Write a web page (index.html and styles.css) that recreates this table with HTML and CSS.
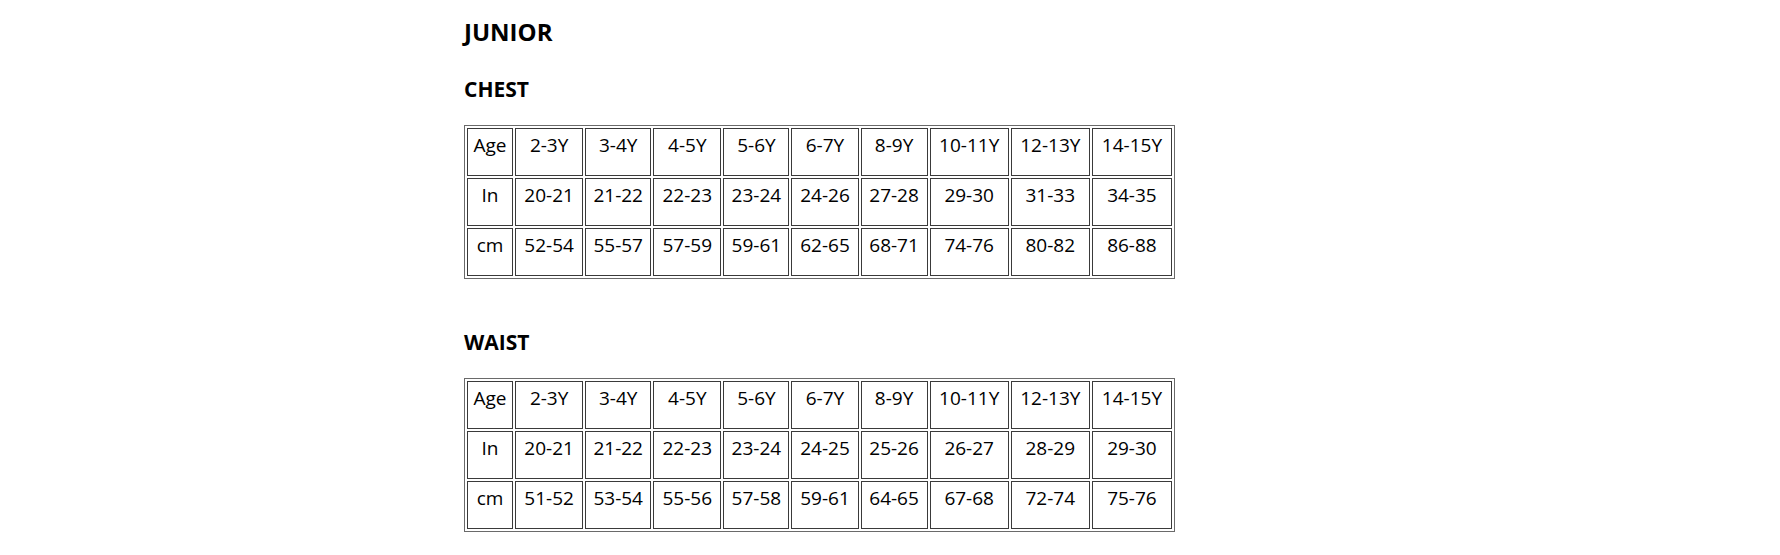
FILE: index.html
```html
<!DOCTYPE html>
<html lang="en">
<head>
<meta charset="utf-8">
<title>Junior size chart</title>
<link rel="stylesheet" href="styles.css">
</head>
<body>
<main class="page">
  <h1 class="title">JUNIOR</h1>

  <h2 class="section">CHEST</h2>
  <table class="sizes">
    <tr><td>Age</td><td>2-3Y</td><td>3-4Y</td><td>4-5Y</td><td>5-6Y</td><td>6-7Y</td><td>8-9Y</td><td>10-11Y</td><td>12-13Y</td><td>14-15Y</td></tr>
    <tr><td>In</td><td>20-21</td><td>21-22</td><td>22-23</td><td>23-24</td><td>24-26</td><td>27-28</td><td>29-30</td><td>31-33</td><td>34-35</td></tr>
    <tr><td>cm</td><td>52-54</td><td>55-57</td><td>57-59</td><td>59-61</td><td>62-65</td><td>68-71</td><td>74-76</td><td>80-82</td><td>86-88</td></tr>
  </table>

  <h2 class="section section-gap">WAIST</h2>
  <table class="sizes">
    <tr><td>Age</td><td>2-3Y</td><td>3-4Y</td><td>4-5Y</td><td>5-6Y</td><td>6-7Y</td><td>8-9Y</td><td>10-11Y</td><td>12-13Y</td><td>14-15Y</td></tr>
    <tr><td>In</td><td>20-21</td><td>21-22</td><td>22-23</td><td>23-24</td><td>24-25</td><td>25-26</td><td>26-27</td><td>28-29</td><td>29-30</td></tr>
    <tr><td>cm</td><td>51-52</td><td>53-54</td><td>55-56</td><td>57-58</td><td>59-61</td><td>64-65</td><td>67-68</td><td>72-74</td><td>75-76</td></tr>
  </table>
</main>
</body>
</html>
```

FILE: styles.css
```css
* {
  box-sizing: border-box;
}

html, body {
  margin: 0;
  padding: 0;
  background: #ffffff;
}

body {
  font-family: "Open Sans", "Noto Sans", sans-serif;
  color: #000000;
}

.page {
  width: 852px;
  margin: 0 auto;
  padding-top: 16px;
}

.title {
  margin: 0;
  font-size: 24px;
  line-height: 32px;
  font-weight: 700;
}

.section {
  margin: 27px 0 22px;
  font-size: 21px;
  line-height: 28px;
  font-weight: 700;
}

.section-gap {
  margin-top: 49px;
}

.sizes {
  border: 1px solid #6a6a6a;
  border-collapse: separate;
  border-spacing: 2px;
  table-layout: fixed;
  width: 711px;
}

.sizes td {
  border: 1px solid #3a3a3a;
  padding: 3px 0 17px;
  height: 48px;
  font-size: 19px;
  line-height: 26px;
  text-align: center;
  vertical-align: top;
  white-space: nowrap;
}

.sizes td:nth-child(1) { width: 46px; }
.sizes td:nth-child(2) { width: 68px; }
.sizes td:nth-child(3) { width: 66px; }
.sizes td:nth-child(4) { width: 68px; }
.sizes td:nth-child(5) { width: 66px; }
.sizes td:nth-child(6) { width: 67px; }
.sizes td:nth-child(7) { width: 67px; }
.sizes td:nth-child(8) { width: 79px; }
.sizes td:nth-child(9) { width: 79px; }
.sizes td:nth-child(10) { width: 80px; }
```
